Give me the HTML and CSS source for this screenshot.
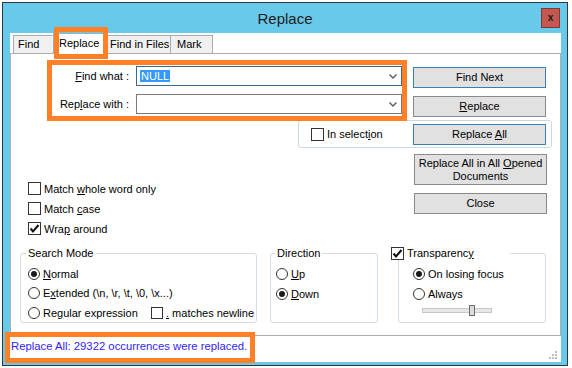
FILE: index.html
```html
<!DOCTYPE html>
<html lang="en">
<head>
    <meta charset="UTF-8">
    <title>Replace</title>
    <link rel="stylesheet" href="styles.css">
</head>
<body>
<div class="desk">
    <div class="window">
        <div class="titlebar">
            <span></span>
            <span class="title">Replace</span>
            <button class="close">x</button>
        </div>
        <div class="client">
            <div class="tabs">
                <div class="tab tab-find">Find</div>
                <div class="tab tab-replace active">Replace</div>
                <div class="tab tab-files">Find in Files</div>
                <div class="tab tab-mark">Mark</div>
            </div>

            <div class="page">
                <!-- find / replace fields + first buttons -->
                <div class="row-top">
                    <div class="fields">
                        <div class="field">
                            <label><u>F</u>ind what :</label>
                            <div class="combo focus">
                                <span class="selected">NULL</span>
                                <svg class="chevron" width="8" height="5" viewBox="0 0 8 5"><path d="M0.5 0.5 L4 4 L7.5 0.5" fill="none" stroke="#5a5a5a" stroke-width="1.4"/></svg>
                            </div>
                        </div>
                        <div class="field">
                            <label>Rep<u>l</u>ace with :</label>
                            <div class="combo">
                                <svg class="chevron" width="8" height="5" viewBox="0 0 8 5"><path d="M0.5 0.5 L4 4 L7.5 0.5" fill="none" stroke="#5a5a5a" stroke-width="1.4"/></svg>
                            </div>
                        </div>
                    </div>
                    <div class="btns">
                        <button class="btn default">Find Next</button>
                        <button class="btn"><u>R</u>eplace</button>
                    </div>
                </div>

                <div class="sel-group">
                    <div class="check"><span class="box"></span><span>In select<u>i</u>on</span></div>
                    <button class="btn default">Replace <u>A</u>ll</button>
                </div>

                <div class="row-mid">
                    <div class="opts">
                        <div class="check"><span class="box"></span><span>Match <u>w</u>hole word only</span></div>
                        <div class="check"><span class="box"></span><span>Match <u>c</u>ase</span></div>
                        <div class="check"><span class="box checked"><svg width="11" height="11" viewBox="0 0 11 11"><path d="M1.5 5.5 L4 8.5 L9.5 2" fill="none" stroke="#111" stroke-width="2"/></svg></span><span>Wra<u>p</u> around</span></div>
                    </div>
                    <div class="btns">
                        <button class="btn tall">Replace All in All <u>O</u>pened Documents</button>
                        <button class="btn">Close</button>
                    </div>
                </div>

                <div class="groups">
                    <fieldset class="group search">
                        <legend>Search Mode</legend>
                        <div class="radio"><span class="dot on"></span><span><u>N</u>ormal</span></div>
                        <div class="radio"><span class="dot"></span><span>E<u>x</u>tended (\n, \r, \t, \0, \x...)</span></div>
                        <div class="radio">
                            <span class="regex"><span class="dot"></span><span>Re<u>g</u>ular expression</span></span>
                            <span class="check"><span class="box"></span><span><u>.</u> matches newline</span></span>
                        </div>
                    </fieldset>
                    <fieldset class="group direction">
                        <legend>Direction</legend>
                        <div class="radio"><span class="dot"></span><span><u>U</u>p</span></div>
                        <div class="radio"><span class="dot on"></span><span><u>D</u>own</span></div>
                    </fieldset>
                    <fieldset class="group transparency">
                        <legend><span class="box checked"><svg width="11" height="11" viewBox="0 0 11 11"><path d="M1.5 5.5 L4 8.5 L9.5 2" fill="none" stroke="#111" stroke-width="2"/></svg></span><span>Transparenc<u>y</u></span></legend>
                        <div class="radio"><span class="dot on"></span><span>On losing focus</span></div>
                        <div class="radio"><span class="dot"></span><span>Always</span></div>
                        <div class="slider"><div class="track"><span class="thumb"></span></div></div>
                    </fieldset>
                </div>
            </div>

            <div class="status">
                <span class="status-text">Replace All: 29322 occurrences were replaced.</span>
                <svg class="grip" width="9" height="9" viewBox="0 0 9 9">
                    <rect x="7" y="1" width="2" height="2" fill="#bdbdbd"/>
                    <rect x="4" y="4" width="2" height="2" fill="#bdbdbd"/>
                    <rect x="7" y="4" width="2" height="2" fill="#bdbdbd"/>
                    <rect x="1" y="7" width="2" height="2" fill="#bdbdbd"/>
                    <rect x="4" y="7" width="2" height="2" fill="#bdbdbd"/>
                    <rect x="7" y="7" width="2" height="2" fill="#bdbdbd"/>
                </svg>
            </div>
        </div>
    </div>
</div>
</body>
</html>
```

FILE: styles.css
```css
*, *::before, *::after {
    margin: 0;
    padding: 0;
    box-sizing: border-box;
}
body {
    width: 572px;
    height: 368px;
    overflow: hidden;
    background: #fff;
    font-family: "Liberation Sans", Arial, sans-serif;
    font-size: 11px;
    color: #000;
}
u { text-decoration: underline; }
.desk {
    padding: 2px 0 0 2px;
}
.window {
    position: relative;
    z-index: 1;
    width: 566px;
    height: 364px;
    border: 1px solid #2e3a40;
    background: #68c9ea;
    padding: 0 6px 3px 7px;
    display: flex;
    flex-direction: column;
}

/* title bar */
.titlebar {
    height: 30px;
    margin: 0 -6px 0 -7px;
    display: grid;
    grid-template-columns: 1fr auto 1fr;
    align-items: center;
}
.title {
    font-size: 15px;
    color: #1c1c1c;
}
.close {
    justify-self: end;
    margin-right: 7px;
    width: 19px;
    height: 20px;
    background: #c4574f;
    border: 1px solid #7c3a35;
    font-family: "Liberation Sans", Arial, sans-serif;
    font-size: 10px;
    font-weight: bold;
    color: #1a1a1a;
    line-height: 16px;
}

/* client area */
.client {
    flex: 1;
    background: #fff;
    display: flex;
    flex-direction: column;
}
.tabs {
    height: 20px;
    display: flex;
    align-items: flex-end;
    padding-left: 3px;
}
.tab {
    height: 18px;
    line-height: 16px;
    padding-left: 4px;
    border: 1px solid #acacac;
    border-bottom: none;
    background: #f0f0f0;
    margin-left: -1px;
    white-space: nowrap;
}
.tab-find { width: 41px; margin-left: 0; }
.tab-replace { width: 53px; }
.tab-files { width: 66px; }
.tab-mark { width: 43px; padding-left: 6px; }
.tab.active {
    position: relative;
    z-index: 2;
    height: 21px;
    margin-bottom: -1px;
    background: #fff;
    line-height: 19px;
    padding-left: 5px;
}
.tab.active::after {
    content: "";
    position: absolute;
    left: 0;
    top: -7px;
    width: 54px;
    height: 32px;
    border: 5px solid #ff8026;
}

.page {
    height: 283px;
    flex-shrink: 0;
    border: 1px solid #adadad;
}

.row-top, .row-mid {
    display: flex;
    align-items: flex-start;
}
.fields {
    position: relative;
    z-index: 1;
    margin: 6px 0 0 36px;
    width: 360px;
    border: 5px solid #ff8026;
    padding: 1px 0 2px;
    display: flex;
    flex-direction: column;
    gap: 8px;
}
.field {
    display: flex;
    align-items: center;
    height: 20px;
}
.field label {
    width: 77px;
    margin-right: 7px;
    text-align: right;
    white-space: nowrap;
}
.combo {
    width: 266px;
    height: 20px;
    border: 1px solid #7a7a7a;
    background: #fff;
    display: flex;
    align-items: center;
    padding-left: 3px;
}
.combo.focus { border-color: #3d6890; }
.selected {
    background: #3399ff;
    color: #fff;
    line-height: 12px;
    padding: 0 1px;
}
.chevron {
    margin-left: auto;
    margin-right: 4px;
}

.btns {
    margin: 13px 13px 0 auto;
    width: 133px;
    display: flex;
    flex-direction: column;
    gap: 8px;
}
.row-top .btns { margin-left: 6px; }
.row-mid .btns { margin-top: 6px; }
.btn {
    width: 133px;
    height: 21px;
    border: 1px solid #8a8a8a;
    background: #e1e1e1;
    font-family: "Liberation Sans", Arial, sans-serif;
    font-size: 11px;
    color: #000;
    line-height: 13px;
}
.btn.default { border-color: #3c7fb1; }
.btn.tall { height: 31px; padding: 0; }

.sel-group {
    margin: -1px 0 0 287px;
    width: 254px;
    height: 28px;
    border: 1px solid #ccd8e0;
    border-radius: 3px;
    display: flex;
    align-items: center;
    padding: 0 5px 0 12px;
}
.sel-group .btn { margin-left: auto; }

.check {
    display: flex;
    align-items: center;
    white-space: nowrap;
}
.box {
    width: 13px;
    height: 13px;
    border: 1px solid #333;
    background: #fff;
    margin-right: 3px;
    display: flex;
    flex-shrink: 0;
}
.opts {
    margin: 31px 0 0 17px;
    display: flex;
    flex-direction: column;
    gap: 1px;
}
.opts .check { height: 19px; }

/* groups */
.groups {
    display: flex;
    margin-top: 9px;
    padding-left: 9px;
}
.group {
    height: 76px;
    border: 1px solid #d3dce2;
    border-radius: 3px;
    min-width: 0;
}
.group legend {
    line-height: 13px;
    padding: 0 2px;
}
.search { width: 237px; padding: 4px 0 0 7px; }
.search legend { margin-left: -2px; }
.direction { width: 108px; margin-left: 13px; padding: 4px 0 0 5px; }
.direction legend { margin-left: -1px; }
.transparency { width: 148px; margin-left: 20px; padding: 4px 0 0 14px; }
.transparency legend {
    display: flex;
    align-items: center;
    margin-left: -22px;
    padding: 0 36px 0 0;
}

.radio {
    display: flex;
    align-items: center;
    height: 19.5px;
    white-space: nowrap;
}
.direction .radio, .transparency .radio { height: 20px; }
.dot {
    width: 12px;
    height: 12px;
    border: 1px solid #333;
    border-radius: 50%;
    background: #fff;
    margin-right: 3px;
    display: flex;
    align-items: center;
    justify-content: center;
    flex-shrink: 0;
}
.dot.on::before {
    content: "";
    width: 6px;
    height: 6px;
    border-radius: 50%;
    background: #1a1a1a;
}
.regex {
    width: 123px;
    display: flex;
    align-items: center;
}
.radio .check .box { width: 12px; height: 12px; }

.slider {
    margin: 1px 0 0 9px;
    height: 11px;
    display: flex;
    align-items: center;
}
.track {
    width: 70px;
    height: 5px;
    border: 1px solid #c6c6c6;
    background: #e7e7e7;
    display: flex;
}
.thumb {
    width: 6px;
    height: 11px;
    margin: -4px 0 0 46px;
    border: 1px solid #6f6f6f;
    background: #dcdcdc;
}

/* status bar */
.status {
    position: relative;
    height: 26px;
    flex-shrink: 0;
    display: flex;
    align-items: flex-start;
    padding: 4px 0 0 1px;
}
.status::after {
    content: "";
    position: absolute;
    left: -5px;
    top: -4px;
    width: 250px;
    height: 31px;
    border: 5px solid #ff8026;
}
.status-text {
    font-size: 11.3px;
    line-height: 13px;
    color: #3322ff;
}
.grip {
    margin: auto 4px 3px auto;
}
```
